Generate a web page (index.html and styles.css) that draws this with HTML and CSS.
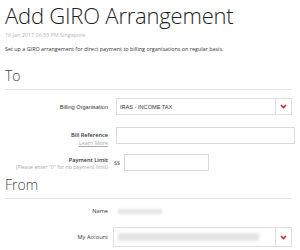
FILE: index.html
```html
<!DOCTYPE html>
<html lang="en">

<head>
    <meta charset="UTF-8">
    <meta name="viewport" content="width=device-width, initial-scale=1.0">
    <title>Add GIRO Arrangement</title>
    <link rel="stylesheet" href="styles.css">
</head>

<body>
    <div class="page">
        <h1 class="title">Add GIRO Arrangement</h1>
        <div class="date">16 Jan 2017 06:53 PM Singapore</div>
        <p class="intro">Set up a GIRO arrangement for direct payment to billing organisations on regular basis.</p>

        <div class="section">
            <h2 class="heading">To</h2>
            <div class="row row-org">
                <div class="label"><span class="label-plain">Billing Organisation</span></div>
                <div class="select">
                    <span class="select-text">IRAS - INCOME TAX</span>
                    <span class="select-btn">
                        <svg width="7" height="5" viewBox="0 0 7 5">
                            <path d="M1 1 L3.5 3.6 L6 1" fill="none" stroke="#d3202f" stroke-width="1.5" />
                        </svg>
                    </span>
                </div>
            </div>
            <div class="row row-ref">
                <div class="label">
                    <span class="label-strong">Bill Reference</span>
                    <a class="learn" href="#">Learn More</a>
                </div>
                <input class="input input-ref" type="text">
            </div>
            <div class="row row-limit">
                <div class="label">
                    <span class="label-strong">Payment Limit</span>
                    <span class="hint">(Please enter "0" for no payment limit)</span>
                </div>
                <div class="limit">
                    <span class="currency">SS</span>
                    <input class="input input-limit" type="text">
                </div>
            </div>
        </div>

        <div class="section">
            <h2 class="heading heading-from">From</h2>
            <div class="row row-name">
                <div class="label"><span class="label-thin">Name</span></div>
                <span class="blur blur-name"></span>
            </div>
            <div class="row row-account">
                <div class="label"><span class="label-thin">My Account</span></div>
                <div class="select select-account">
                    <span class="blur blur-account"></span>
                    <span class="select-btn">
                        <svg width="7" height="5" viewBox="0 0 7 5">
                            <path d="M1 1 L3.5 3.6 L6 1" fill="none" stroke="#d3202f" stroke-width="1.5" />
                        </svg>
                    </span>
                </div>
            </div>
        </div>
    </div>
</body>

</html>
```

FILE: styles.css
```css
body {
    margin: 0;
    background: #fff;
    font-family: "Open Sans", sans-serif;
    color: #333;
}

.page {
    padding: 0 8px 0 5px;
}

.title {
    margin: 0;
    padding-top: 1px;
    font-size: 22px;
    font-weight: 300;
    line-height: 28px;
    color: #1e1e1e;
    letter-spacing: -0.2px;
}

.date {
    margin-top: 2px;
    font-size: 5.4px;
    line-height: 8px;
    color: #b5b5b5;
}

.intro {
    margin: 6px 0 0;
    font-size: 5.4px;
    line-height: 8px;
    color: #333;
}

.heading {
    margin: 0;
    padding: 15px 0 5px;
    font-size: 14px;
    font-weight: 300;
    line-height: 16px;
    color: #444;
    border-bottom: 1px solid #e6e6e6;
}

.heading-from {
    padding: 6px 0 5px;
}

.row {
    display: flex;
    align-items: flex-start;
}

.label {
    width: 103px;
    flex: none;
    display: flex;
    flex-direction: column;
    align-items: flex-end;
    text-align: right;
    margin-right: 8px;
}

.label-plain {
    font-family: "Liberation Sans", sans-serif;
    font-size: 5.6px;
    color: #333;
}

.label-strong {
    font-size: 5.6px;
    font-weight: 600;
    color: #333;
    line-height: 8px;
}

.label-thin {
    font-size: 5.6px;
    color: #333;
    line-height: 8px;
}

.learn {
    font-size: 5.4px;
    color: #aaa;
    line-height: 8px;
    text-decoration: underline;
}

.hint {
    font-size: 5.2px;
    color: #aaa;
    line-height: 7px;
    white-space: nowrap;
}

.row-org {
    margin-top: 8px;
    align-items: center;
}

.select {
    flex: 1;
    border: 1px solid #dedede;
    display: flex;
    align-items: center;
    box-sizing: border-box;
    height: 17px;
}

.select-text {
    flex: 1;
    padding-left: 3px;
    font-family: "Liberation Sans", sans-serif;
    font-size: 5.6px;
    color: #333;
}

.select-btn {
    width: 15px;
    height: 100%;
    border-left: 1px solid #dedede;
    display: flex;
    align-items: center;
    justify-content: center;
}

.row-ref {
    margin-top: 12px;
}

.row-ref .label {
    padding-top: 4px;
}

.input {
    display: block;
    margin: 0;
    padding: 0;
    height: 17px;
    box-sizing: border-box;
    border: 1px solid #d9d9d9;
    background: #fff;
}

.input-ref {
    flex: 1;
}

.row-limit {
    margin-top: 7px;
}

.row-limit .label {
    padding-top: 2px;
    margin-right: 6px;
}

.limit {
    display: flex;
    align-items: center;
}

.currency {
    font-size: 5.6px;
    color: #444;
    margin-right: 4px;
}

.input-limit {
    width: 85px;
}

.row-name {
    margin-top: 8px;
    align-items: center;
}

.blur {
    display: block;
    background: #e4e4e4;
    filter: blur(1.5px);
}

.blur-name {
    width: 44px;
    height: 5px;
    margin-left: 2px;
}

.row-account {
    margin-top: 12px;
    align-items: center;
}

.select-account {
    height: 20px;
    margin-left: -3px;
}

.blur-account {
    flex: 1;
    height: 8px;
    margin: 0 16px 0 4px;
}
```
